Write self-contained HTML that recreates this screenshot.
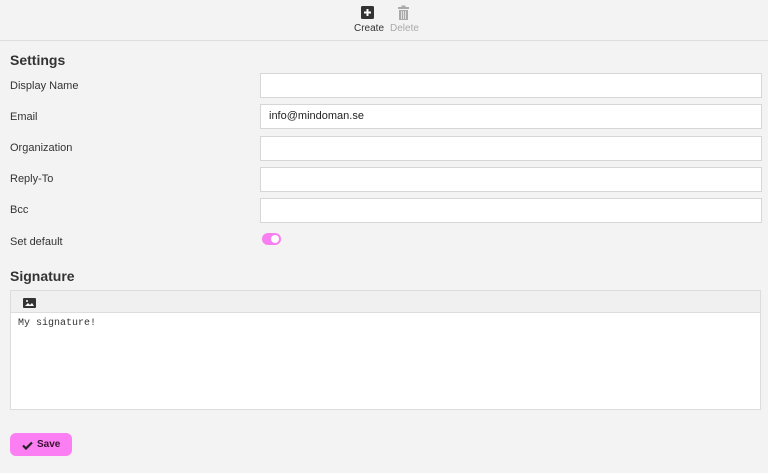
<!DOCTYPE html>
<html><head><style>
body{margin:0;width:768px;height:473px;background:#f3f3f3;font-family:"Liberation Sans",sans-serif;color:#333;position:relative;overflow:hidden}
.top{position:absolute;left:0;top:0;width:768px;height:40px;border-bottom:1px solid #ddd;background:#f3f3f3}
.tb{position:absolute;top:23px;font-size:10px}
h2{position:absolute;margin:0;font-size:14px;font-weight:bold;color:#333}
.lbl{position:absolute;left:10px;font-size:11px;color:#333}
.inp{position:absolute;left:260px;width:502px;height:25px;background:#fff;border:1px solid #d6d6d6;box-sizing:border-box;font-size:11px;line-height:23px;padding-left:8px;color:#222}
</style></head><body>
<div class="top">
<svg style="position:absolute;left:361px;top:6px" width="13" height="13"><rect x="0" y="0" width="13" height="13" rx="1.5" fill="#333"/><path d="M6.5 3v7M3 6.5h7" stroke="#fff" stroke-width="2"/></svg>
<svg style="position:absolute;left:397px;top:5px" width="13" height="15"><rect x="1" y="2" width="11" height="2" fill="#aaa"/><rect x="4.5" y="0.5" width="4" height="2" fill="#aaa"/><rect x="2" y="5" width="9" height="10" fill="#aaa"/><path d="M4.5 6v8M6.5 6v8M8.5 6v8" stroke="#eee" stroke-width="0.8"/></svg>
<div class="tb" style="left:354px;color:#333">Create</div>
<div class="tb" style="left:390px;color:#aaa">Delete</div>
</div>
<h2 style="left:10px;top:52px">Settings</h2>
<div class="lbl" style="top:80px">Display Name</div><div class="inp" style="top:73px"></div>
<div class="lbl" style="top:111px">Email</div><div class="inp" style="top:104px">info@mindoman.se</div>
<div class="lbl" style="top:142px">Organization</div><div class="inp" style="top:136px"></div>
<div class="lbl" style="top:173px">Reply-To</div><div class="inp" style="top:167px"></div>
<div class="lbl" style="top:204px">Bcc</div><div class="inp" style="top:198px"></div>
<div class="lbl" style="top:236px">Set default</div>
<div style="position:absolute;left:262px;top:233px;width:19px;height:12px;border-radius:6px;background:#f87ff0"><div style="position:absolute;right:2px;top:2px;width:8px;height:8px;border-radius:50%;background:#fff"></div></div>
<h2 style="left:10px;top:268px">Signature</h2>
<div style="position:absolute;left:10px;top:290px;width:751px;height:120px;border:1px solid #dcdcdc;box-sizing:border-box;background:#fff">
<div style="height:21px;background:#f0f0f0;border-bottom:1px solid #ddd"></div>
<svg style="position:absolute;left:12px;top:7px" width="13" height="10"><rect x="0" y="0" width="13" height="10" rx="1" fill="#333"/><path d="M2 8l3-3 2 2 2-2 2 3z" fill="#fff"/><circle cx="4" cy="3" r="1" fill="#fff"/></svg>
<div style="position:absolute;left:7px;top:27px;font-family:'Liberation Mono',monospace;font-size:10px;color:#333">My signature!</div>
</div>
<div style="position:absolute;left:10px;top:433px;width:62px;height:23px;border-radius:6px;background:#fb7ef3;font-size:10px;font-weight:bold;color:#3a1030;line-height:24px">
<svg style="position:absolute;left:12px;top:8px" width="11" height="9"><path d="M1 4.5l3 3 6-6" stroke="#222" stroke-width="2.2" fill="none"/></svg>
<span style="position:absolute;left:27px">Save</span></div>
</body></html>
